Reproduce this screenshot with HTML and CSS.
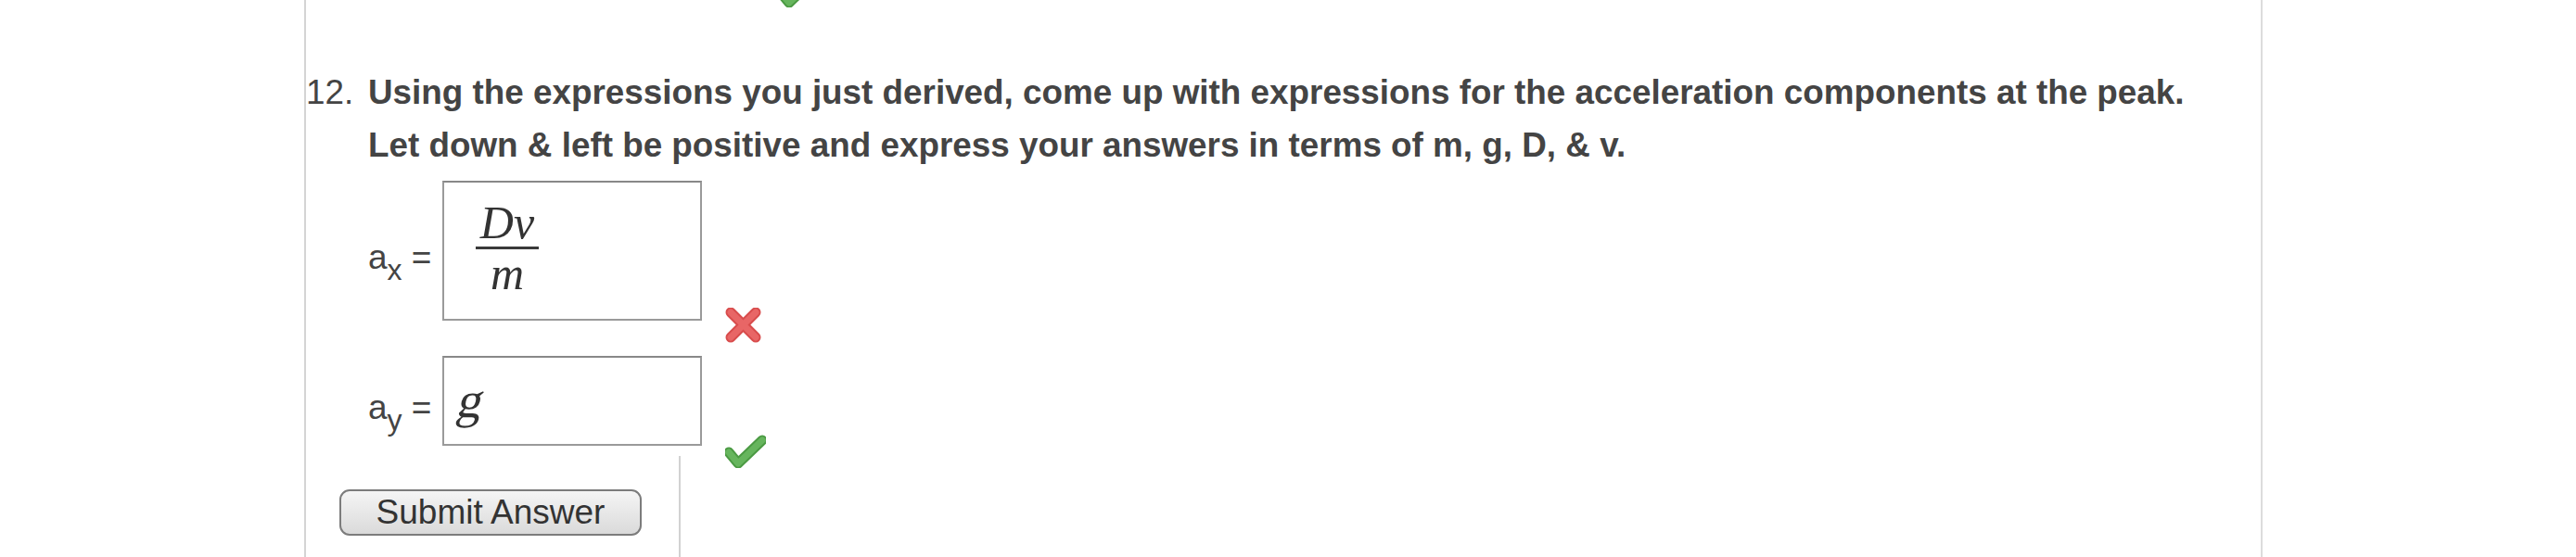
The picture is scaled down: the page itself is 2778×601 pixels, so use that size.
FILE: index.html
```html
<!DOCTYPE html>
<html lang="en">
<head>
<meta charset="utf-8">
<title>Question 12</title>
<link rel="stylesheet" href="styles.css">
</head>
<body>
<div class="page">
  <div class="prev">
    <svg class="mark check" width="44" height="36" viewBox="0 0 44 36" aria-hidden="true">
      <polyline points="4,19 14,31 40,6" fill="none" stroke="#4b9a43" stroke-width="11" stroke-linecap="round" stroke-linejoin="round"/>
      <polyline points="4,19 14,31 40,6" fill="none" stroke="#66b55d" stroke-width="7" stroke-linecap="round" stroke-linejoin="round"/>
    </svg>
  </div>

  <div class="question">
    <span class="num">12.</span>
    <p class="qtext">Using the expressions you just derived, come up with expressions for the acceleration components at the peak.<br>Let down &amp; left be positive and express your answers in terms of m, g, D, &amp; v.</p>
  </div>

  <div class="answers">
    <div class="row">
      <div class="label">a<sub>x</sub> =</div>
      <div class="box box-frac">
        <span class="frac">
          <span class="numer">Dv</span>
          <span class="bar"></span>
          <span class="denom">m</span>
        </span>
      </div>
      <svg class="mark cross" width="40" height="38" viewBox="0 0 40 38" aria-hidden="true">
        <g stroke-linecap="round">
          <line x1="6" y1="5" x2="33" y2="32" stroke="#d84c4c" stroke-width="11"/>
          <line x1="33" y1="5" x2="6" y2="32" stroke="#d84c4c" stroke-width="11"/>
          <line x1="6" y1="5" x2="33" y2="32" stroke="#e86666" stroke-width="7"/>
          <line x1="33" y1="5" x2="6" y2="32" stroke="#e86666" stroke-width="7"/>
        </g>
      </svg>
    </div>
    <div class="row row-second">
      <div class="label">a<sub>y</sub> =</div>
      <div class="box box-single"><span class="mi">g</span></div>
      <svg class="mark check" width="44" height="36" viewBox="0 0 44 36" aria-hidden="true">
        <polyline points="4,19 14,31 40,6" fill="none" stroke="#4b9a43" stroke-width="11" stroke-linecap="round" stroke-linejoin="round"/>
        <polyline points="4,19 14,31 40,6" fill="none" stroke="#66b55d" stroke-width="7" stroke-linecap="round" stroke-linejoin="round"/>
      </svg>
    </div>
  </div>

  <div class="submit-area">
    <button class="submit" type="button">Submit Answer</button>
  </div>
</div>
</body>
</html>
```

FILE: styles.css
```css
html, body {
  margin: 0;
  padding: 0;
  background: #ffffff;
  overflow: hidden;
}

body {
  font-family: "Liberation Sans", Arial, Helvetica, sans-serif;
  color: #444444;
}

.page {
  margin-left: 328px;
  width: 2112px;
  box-sizing: border-box;
  border-left: 2px solid #d4d4d4;
  border-right: 2px solid #dcdcdc;
  min-height: 700px;
}

.prev {
  height: 8px;
  overflow: hidden;
  display: flex;
  align-items: flex-end;
  padding-left: 507px;
}

.question {
  display: flex;
  margin-top: 63px;
  font-size: 36.85px;
  line-height: 57px;
}

.num {
  width: 67px;
  flex: none;
  font-weight: normal;
}

.qtext {
  margin: 0;
  font-weight: bold;
}

.answers {
  padding-left: 67px;
  margin-top: 10px;
}

.row {
  display: flex;
  align-items: center;
}

.row-second {
  margin-top: 38px;
}

.label {
  width: 80px;
  flex: none;
  font-size: 37px;
  line-height: 42px;
  padding-top: 14px;
  color: #444444;
  white-space: nowrap;
}

.label sub {
  font-size: 32px;
  line-height: 0;
  vertical-align: -12px;
}

.box {
  width: 280px;
  box-sizing: border-box;
  border: 2px solid #9a9a9a;
  border-top-color: #888888;
  background: #ffffff;
  font-family: "Liberation Serif", "Times New Roman", serif;
  font-style: italic;
  font-size: 50px;
  line-height: 44px;
  color: #333333;
}

.box-frac {
  height: 151px;
  padding: 21px 0 0 33px;
}

.box-single {
  height: 97px;
  padding: 24px 0 0 16px;
}

.mi {
  display: inline-block;
  font-style: normal;
  font-size: 54px;
  transform: skewX(-13deg);
}

.frac {
  display: inline-flex;
  flex-direction: column;
  align-items: center;
  width: 70px;
}

.numer, .denom {
  display: block;
  height: 44px;
}

.bar {
  display: block;
  width: 68px;
  height: 3px;
  background: #3a3a3a;
  margin: 4px 0 4px;
}

.mark {
  display: block;
  flex: none;
}

.row .mark {
  align-self: flex-end;
  margin-left: 25px;
  margin-bottom: -24px;
}

.submit-area {
  width: 404px;
  box-sizing: border-box;
  margin-top: 11px;
  border-right: 2px solid #d2d2d2;
  padding: 36px 0 0 36px;
  height: 200px;
}

.submit {
  width: 326px;
  height: 50px;
  box-sizing: border-box;
  border: 2px solid #7c7c7c;
  border-radius: 11px;
  background: linear-gradient(#f5f5f5, #dadada);
  font-family: "Liberation Sans", Arial, Helvetica, sans-serif;
  font-size: 37px;
  line-height: 44px;
  color: #333333;
  padding: 0;
  margin: 0;
}
```
